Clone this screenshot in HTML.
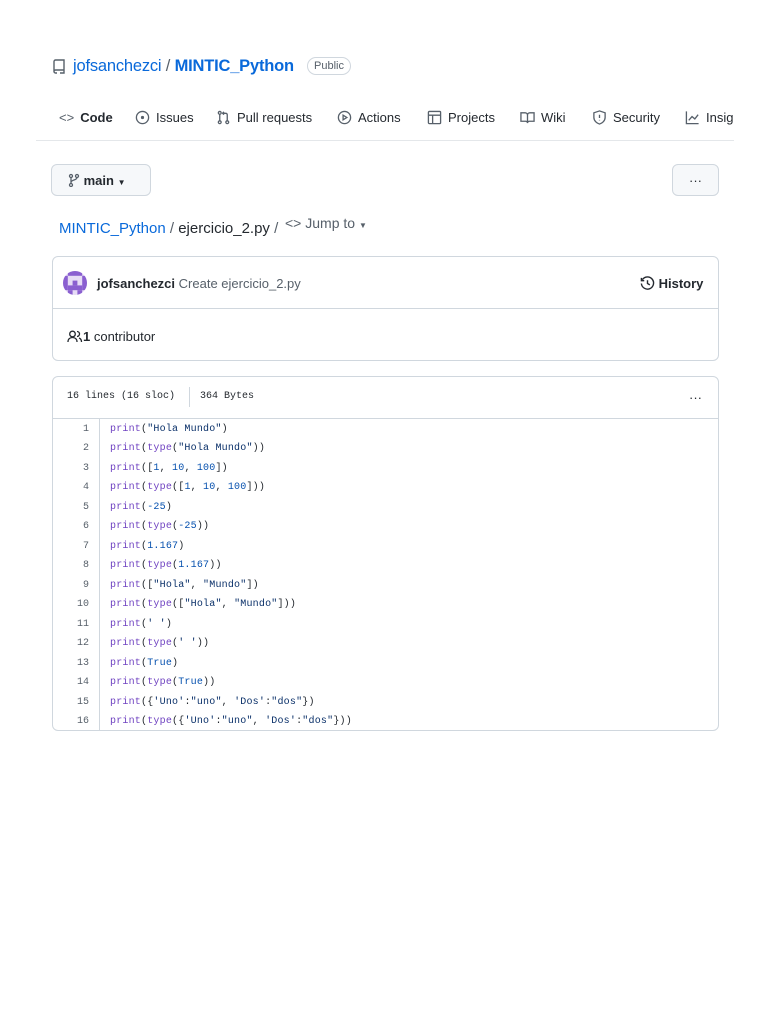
<!DOCTYPE html>
<html><head><meta charset="utf-8"><style>
*{box-sizing:border-box;margin:0;padding:0}
body{width:768px;height:1024px;background:#fff;font-family:"Liberation Sans",sans-serif;color:#24292f;position:relative;overflow:hidden}
.abs{position:absolute}
a{color:#0969da;text-decoration:none}
.tab{position:absolute;top:110px;font-size:13px;color:#24292f;display:flex;align-items:center;gap:6px}
.tab svg{width:15px;height:15px;stroke:#57606a;fill:none;stroke-width:1.4}
.box{position:absolute;left:52px;width:667px;border:1px solid #d0d7de;border-radius:6px}
.code{font-family:"Liberation Mono",monospace;font-size:10px}
.ln{position:absolute;left:52px;width:37px;text-align:right;color:#57606a;font-family:"Liberation Mono",monospace;font-size:10px}
.cl{position:absolute;left:110px;font-family:"Liberation Mono",monospace;font-size:10px;letter-spacing:0.2px;color:#24292f;white-space:pre}
.f{color:#6f42c1}.s{color:#0a3069}.n{color:#0550ae}
</style></head><body>
<svg class="abs" style="left:52px;top:59px" width="14" height="16" viewBox="0 0 14 16" fill="none" stroke="#57606a" stroke-width="1.4"><path d="M2 13V2.5A1.5 1.5 0 0 1 3.5 1H12v10H3.5A1.5 1.5 0 0 0 2 12.5 1.5 1.5 0 0 0 3.5 14H5M8 14h4v-3"/></svg>
<div class="abs" style="left:73px;top:57px;font-size:16.5px;letter-spacing:-0.2px"><a>jofsanchezci</a> <span style="color:#57606a">/</span> <a style="font-weight:bold">MINTIC_Python</a></div>
<div class="abs" style="left:307px;top:57px;border:1px solid #d0d7de;border-radius:10px;font-size:11px;color:#57606a;padding:2px 6px">Public</div>
<div class="tab" style="left:59px;font-weight:bold"><span style="color:#57606a;font-weight:normal">&lt;&gt;</span>Code</div>
<div class="tab" style="left:135px"><svg viewBox="0 0 16 16"><circle cx="8" cy="8" r="6.5"/><circle cx="8" cy="8" r="1" fill="#57606a"/></svg>Issues</div>
<div class="tab" style="left:216px"><svg viewBox="0 0 16 16"><circle cx="4" cy="3" r="1.5"/><circle cx="4" cy="13" r="1.5"/><circle cx="12" cy="13" r="1.5"/><path d="M4 4.5v7M12 11.5V5a1.5 1.5 0 0 0-1.5-1.5H7M8.5 2 7 3.5 8.5 5"/></svg>Pull requests</div>
<div class="tab" style="left:337px"><svg viewBox="0 0 16 16"><circle cx="8" cy="8" r="6.5"/><path d="M6.5 5.5v5l4-2.5z"/></svg>Actions</div>
<div class="tab" style="left:427px"><svg viewBox="0 0 16 16"><rect x="1.5" y="1.5" width="13" height="13" rx="1"/><path d="M1.5 5.5h13M6 5.5v9"/></svg>Projects</div>
<div class="tab" style="left:520px"><svg viewBox="0 0 16 16"><path d="M1 3h4.5A2.5 2.5 0 0 1 8 5.5V14a2 2 0 0 0-2-2H1zM15 3h-4.5A2.5 2.5 0 0 0 8 5.5V14a2 2 0 0 1 2-2h5z"/></svg>Wiki</div>
<div class="tab" style="left:592px"><svg viewBox="0 0 16 16"><path d="M8 1 2 3v5c0 3.5 3 6 6 7 3-1 6-3.5 6-7V3z"/><path d="M8 5v3.5M8 10.5v.5"/></svg>Security</div>
<div class="tab" style="left:685px"><svg viewBox="0 0 16 16"><path d="M1.5 1.5v13h13M4 11l3.5-4 3 2.5L14 5"/></svg>Insig</div>
<div class="abs" style="left:36px;top:140px;width:698px;height:1px;background:#e4e7ea"></div>
<div class="abs" style="left:51px;top:164px;width:100px;height:32px;border:1px solid #d0d7de;border-radius:6px;background:#f6f8fa;font-size:13px;font-weight:bold;padding:8px 0 0 16px"><svg width="12" height="14" viewBox="0 0 12 14" fill="none" stroke="#57606a" stroke-width="1.3" style="vertical-align:-2px"><circle cx="3" cy="3" r="1.5"/><circle cx="3" cy="12" r="1.5"/><circle cx="9" cy="3" r="1.5"/><path d="M3 4.5v6M9 4.5c0 3-6 2-6 5"/></svg> main <span style="font-size:8px">▼</span></div>
<div class="abs" style="left:672px;top:164px;width:47px;height:32px;border:1px solid #d0d7de;border-radius:6px;background:#f6f8fa;text-align:center;font-size:13px;line-height:32px;color:#24292f">···</div>
<div class="abs" style="left:59px;top:220px;font-size:15px"><a>MINTIC_Python</a> <span style="color:#57606a">/</span> <span>ejercicio_2.py</span> <span style="color:#57606a">/</span></div>
<div class="abs" style="left:285px;top:215px;font-size:14px;color:#57606a">&lt;&gt; Jump to <span style="font-size:8px">▼</span></div>
<div class="box" style="top:256px;height:105px"></div>
<div class="abs" style="left:52px;top:308px;width:667px;height:1px;background:#d0d7de"></div>
<div class="abs" style="left:63px;top:271px;width:24px;height:24px;border-radius:50%;background:#e6dcf5;overflow:hidden"><svg width="24" height="24" viewBox="0 0 5 5"><g fill="#8a5fd0"><rect x="1" y="0" width="3" height="1"/><rect x="0" y="1" width="1" height="3"/><rect x="4" y="1" width="1" height="3"/><rect x="2" y="2" width="1" height="1"/><rect x="1" y="3" width="3" height="1"/><rect x="1" y="4" width="1" height="1"/><rect x="3" y="4" width="1" height="1"/></g></svg></div>
<div class="abs" style="left:97px;top:276px;font-size:13px"><b>jofsanchezci</b> <span style="color:#57606a">Create ejercicio_2.py</span></div>
<div class="abs" style="left:640px;top:276px;font-size:13px;font-weight:bold"><svg width="15" height="15" viewBox="0 0 16 16" fill="none" stroke="#24292f" stroke-width="1.5" style="vertical-align:-3px"><path d="M2.5 4A6.5 6.5 0 1 1 1.5 8M1.5 2v3h3M8 4.5V8l2.5 1.5"/></svg> History</div>
<div class="abs" style="left:67px;top:329px;font-size:13px"><svg width="16" height="13" viewBox="0 0 16 13" fill="none" stroke="#24292f" stroke-width="1.3" style="vertical-align:-2px"><circle cx="5.5" cy="4" r="2.8"/><path d="M1 12c0-3 2-4.5 4.5-4.5S10 9 10 12M10 1.5a2.5 2.5 0 0 1 0 5M12 8c1.5.5 2.5 2 2.5 4"/></svg><b>1</b> contributor</div>
<div class="box" style="top:376px;height:355px"></div>
<div class="abs" style="left:52px;top:418px;width:667px;height:1px;background:#d0d7de"></div>
<div class="abs code" style="left:67px;top:391px;color:#24292f">16 lines (16 sloc)</div>
<div class="abs" style="left:189px;top:387px;width:1px;height:20px;background:#d0d7de"></div>
<div class="abs code" style="left:200px;top:391px;color:#24292f">364 Bytes</div>
<div class="abs" style="left:689px;top:390px;font-size:13px">···</div>
<div class="abs" style="left:99px;top:419px;width:1px;height:311px;background:#d0d7de"></div>
<div class="ln" style="top:423.5px">1</div><div class="cl" style="top:423.5px"><span class="f">print</span>(<span class="s">"Hola Mundo"</span>)</div>
<div class="ln" style="top:443px">2</div><div class="cl" style="top:443px"><span class="f">print</span>(<span class="f">type</span>(<span class="s">"Hola Mundo"</span>))</div>
<div class="ln" style="top:462.5px">3</div><div class="cl" style="top:462.5px"><span class="f">print</span>([<span class="n">1</span>, <span class="n">10</span>, <span class="n">100</span>])</div>
<div class="ln" style="top:482px">4</div><div class="cl" style="top:482px"><span class="f">print</span>(<span class="f">type</span>([<span class="n">1</span>, <span class="n">10</span>, <span class="n">100</span>]))</div>
<div class="ln" style="top:501.5px">5</div><div class="cl" style="top:501.5px"><span class="f">print</span>(<span class="n">-25</span>)</div>
<div class="ln" style="top:521px">6</div><div class="cl" style="top:521px"><span class="f">print</span>(<span class="f">type</span>(<span class="n">-25</span>))</div>
<div class="ln" style="top:540.5px">7</div><div class="cl" style="top:540.5px"><span class="f">print</span>(<span class="n">1.167</span>)</div>
<div class="ln" style="top:560px">8</div><div class="cl" style="top:560px"><span class="f">print</span>(<span class="f">type</span>(<span class="n">1.167</span>))</div>
<div class="ln" style="top:579.5px">9</div><div class="cl" style="top:579.5px"><span class="f">print</span>([<span class="s">"Hola"</span>, <span class="s">"Mundo"</span>])</div>
<div class="ln" style="top:599px">10</div><div class="cl" style="top:599px"><span class="f">print</span>(<span class="f">type</span>([<span class="s">"Hola"</span>, <span class="s">"Mundo"</span>]))</div>
<div class="ln" style="top:618.5px">11</div><div class="cl" style="top:618.5px"><span class="f">print</span>(<span class="s">' '</span>)</div>
<div class="ln" style="top:638px">12</div><div class="cl" style="top:638px"><span class="f">print</span>(<span class="f">type</span>(<span class="s">' '</span>))</div>
<div class="ln" style="top:657.5px">13</div><div class="cl" style="top:657.5px"><span class="f">print</span>(<span class="n">True</span>)</div>
<div class="ln" style="top:677px">14</div><div class="cl" style="top:677px"><span class="f">print</span>(<span class="f">type</span>(<span class="n">True</span>))</div>
<div class="ln" style="top:696.5px">15</div><div class="cl" style="top:696.5px"><span class="f">print</span>({<span class="s">'Uno'</span>:<span class="s">"uno"</span>, <span class="s">'Dos'</span>:<span class="s">"dos"</span>})</div>
<div class="ln" style="top:716px">16</div><div class="cl" style="top:716px"><span class="f">print</span>(<span class="f">type</span>({<span class="s">'Uno'</span>:<span class="s">"uno"</span>, <span class="s">'Dos'</span>:<span class="s">"dos"</span>}))</div>
</body></html>
